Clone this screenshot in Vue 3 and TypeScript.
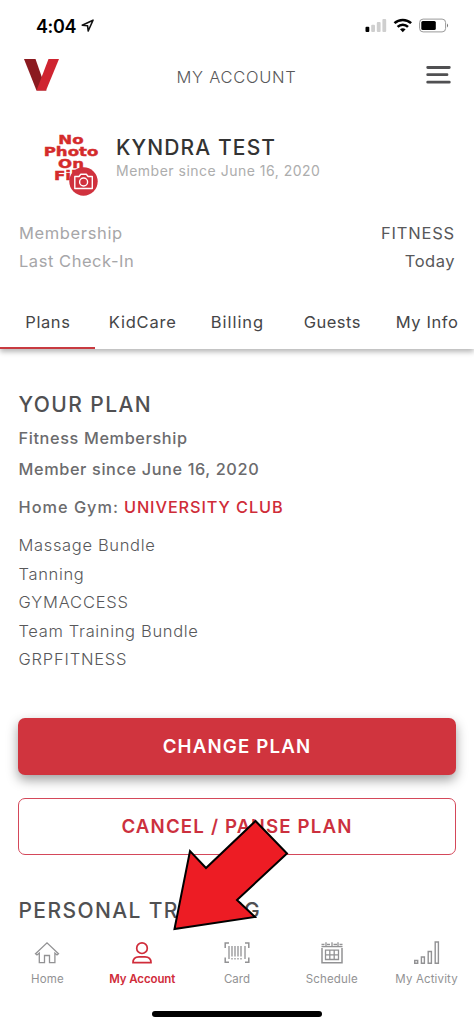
<script setup lang="ts">
interface Tab { label: string; cls: string }

const tabs: Tab[] = [
  { label: 'Plans', cls: 'plans' },
  { label: 'KidCare', cls: 'kidcare' },
  { label: 'Billing', cls: 'billing' },
  { label: 'Guests', cls: 'guests' },
  { label: 'My Info', cls: 'info' },
]
const bundles: string[] = ['Massage Bundle', 'Tanning', 'GYMACCESS', 'Team Training Bundle', 'GRPFITNESS']
</script>

<template>
  <div class="screen">
    <header class="status">
      <div class="time">
        <span>4:04</span>
        <svg width="14" height="14" viewBox="0 0 14 14"><path d="M1.2 6.2 12 1.2 7.2 12 6.6 6.8Z" fill="none" stroke="#111" stroke-width="1.6" stroke-linejoin="round" /></svg>
      </div>
      <svg class="system" width="86" height="18" viewBox="0 0 86 18">
        <rect x="0.5" y="9.7" width="3.8" height="5.3" rx="1" fill="#000" />
        <g fill="#cfcfcf">
          <rect x="6.2" y="7.8" width="3.8" height="7.2" rx="1" />
          <rect x="11.8" y="5" width="3.8" height="10" rx="1" />
          <rect x="17.4" y="2" width="3.8" height="13" rx="1" />
        </g>
        <g fill="none" stroke="#000" stroke-width="2.5">
          <path d="M29.5 6.2C34 1.8 41.6 1.8 46.1 6.2" />
          <path d="M32.6 9.9C35.5 7 40.1 7 43 9.9" />
        </g>
        <path d="M35 12.300Q37.800 10 40.600 12.300L37.800 15.300Z" />
        <rect x="54.6" y="2.1" width="26" height="12.8" rx="3.5" fill="none" stroke="#999" />
        <rect x="56.3" y="4" width="14.5" height="9" rx="1.5" />
        <path d="M82 6.5Q84.2 8.5 82 10.5Z" fill="#777" />
      </svg>
    </header>

    <div class="bar">
      <svg class="logo" width="36" height="32" viewBox="0 0 36 32">
        <path d="M0 0H11.5L22.500 31.500H12.500Z" fill="#8b1a20" />
        <path d="M24.500 0H35L22 31.500H12.500Z" fill="#cf2430" />
      </svg>
      <h1>MY ACCOUNT</h1>
      <svg class="menu" width="26" height="20" viewBox="0 0 26 20">
        <path d="M1.7 2.5H23.3M1.7 9.7H21M1.7 17.200H23.300" stroke="#505052" stroke-width="2.800" stroke-linecap="round" />
      </svg>
    </div>

    <section class="profile">
      <div class="photo">
        <div class="none"><span>No</span><span>Photo</span><span>On</span><span>File</span></div>
        <svg class="camera" width="29" height="29" viewBox="0 0 29 29">
          <circle cx="14.500" cy="14.500" r="14.200" fill="#d0323e" />
          <g fill="none" stroke="#fff" stroke-width="1.400" stroke-linejoin="round">
            <path d="M5.800 9.500H10L11.800 7.200H17.300L19.100 9.500H23.300V21.500H5.800Z" />
            <circle cx="14.600" cy="15" r="4" />
          </g>
        </svg>
      </div>
      <div class="who">
        <h2>KYNDRA TEST</h2>
        <p>Member since June 16, 2020</p>
      </div>
    </section>

    <dl class="meta">
      <div><dt>Membership</dt><dd class="caps">FITNESS</dd></div>
      <div><dt class="last">Last Check-In</dt><dd>Today</dd></div>
    </dl>

    <nav class="tabs">
      <a v-for="(tab, i) in tabs" :key="tab.label" :class="[tab.cls, { active: i === 0 }]">{{ tab.label }}</a>
    </nav>

    <main>
      <h3>YOUR PLAN</h3>
      <p class="strong">Fitness Membership</p>
      <p class="strong">Member since June 16, 2020</p>
      <p class="gym"><span>Home Gym:</span><a>UNIVERSITY CLUB</a></p>
      <ul>
        <li v-for="item in bundles" :key="item" :class="{ caps: item === item.toUpperCase() }">{{ item }}</li>
      </ul>
      <button class="primary">CHANGE PLAN</button>
      <button class="outline">CANCEL / PAUSE PLAN</button>
      <h3 class="training">PERSONAL TRAINING</h3>
    </main>

    <nav class="bottom">
      <a>
        <svg width="26" height="24" viewBox="0 0 26 24"><path d="M1.500 12.700 13 1.800 24.500 12.700 23 14 20.900 12.100V21.600H15.500V14.500H10.500V21.600H5.300V12.100L3 14Z" /></svg>
        <span class="home">Home</span>
      </a>
      <a class="current">
        <svg width="26" height="24" viewBox="0 0 26 24"><g stroke-width="1.700"><circle cx="13" cy="7.200" r="5.300" /><path d="M4 21.600C4 17.800 6.400 15.800 10 15.800H16C19.600 15.800 22 17.800 22 21.600Z" /></g></svg>
        <span>My Account</span>
      </a>
      <a>
        <svg width="26" height="24" viewBox="0 0 26 24"><path d="M5 2H1.200V7M21 2H24.800V7M5 21.200H1.200V16.500M21 21.200H24.800V16.500" stroke-width="1.500" /><path d="M5 5V18M8 5V15.500M11 5V15.500M14 5V15.500M17 5V15.500M21 5V18M8 17V18.500M11 17V18.500M14 17V18.500M17 17V18.500" /></svg>
        <span>Card</span>
      </a>
      <a>
        <svg width="26" height="24" viewBox="0 0 26 24"><path d="M2.500 3.500H5.500M8 3.500H11M14.500 3.500H18M20.500 3.500H23.500M2.500 5.700H23.500M7 1.300V6M13 1.300V6M19 1.300V6" /><path d="M3 7V21.700H23V7" stroke-width="1.500" /><path d="M6.500 9.200H19.500V18.500H6.500ZM10.800 9.200V18.500M15.200 9.200V18.500M6.500 13.800H19.500" /></svg>
        <span class="schedule">Schedule</span>
      </a>
      <a>
        <svg width="26" height="24" viewBox="0 0 26 24"><path d="M.700 19.500H3.700V22.300H.700ZM7.400 16H10.400V22.300H7.400ZM14.200 10.500H17.400V22.300H14.200ZM21.200 1H24.400V22.300H21.200Z" stroke-width="1.400" /></svg>
        <span class="activity">My Activity</span>
      </a>
    </nav>
    <div class="grip"></div>

    <svg class="pointer" width="118" height="114" viewBox="0 0 118 114">
      <path d="M3.500 110 19 32 35 49 84.500 2 116 34.500 66 81 84 98Z" fill="#ed1c24" stroke="#000" stroke-width="2" />
    </svg>
  </div>
</template>

<style>
body { margin: 0; background: #fff; }
</style>

<style scoped>
.screen { position: relative; display: flex; flex-direction: column; width: 474px; height: 1026px; overflow: hidden; background: #fff; font-family: Inter, "Liberation Sans", sans-serif; font-size: 16.5px; color: #58585a; }
h1, h2, h3, p, dl, dd, ul { margin: 0; padding: 0; font-weight: 400; }
svg { display: block; flex: none; }

.status { display: flex; justify-content: space-between; align-items: center; height: 52px; padding: 0 23px 0 36px; box-sizing: border-box; }
.time { display: flex; align-items: center; gap: 5px; font-size: 18px; font-weight: 600; letter-spacing: -.4px; color: #000; }

.bar { display: flex; justify-content: space-between; align-items: center; height: 49px; padding: 0 22px 0 24px; }
.bar h1 { font-size: 16.5px; font-weight: 300; letter-spacing: .72px; line-height: 24px; padding-right: 4px; }
.logo { margin-top: -3px; }
.menu { margin: -3px 0 0 9px; }

.profile { display: flex; height: 118px; padding-left: 42px; box-sizing: border-box; }
.photo { position: relative; width: 58px; height: 70px; margin-top: 33px; }
.none { display: flex; flex-direction: column; align-items: center; font: bold 12px/12px "DejaVu Sans", sans-serif; color: #d42b2b; -webkit-text-stroke: .4px #d42b2b; transform: scaleX(1.38); }
.camera { position: absolute; left: 27px; top: 33px; }
.who { padding: 33.5px 0 0 16px; }
.who h2 { font-size: 21px; line-height: 26px; font-weight: 500; letter-spacing: 1.12px; color: #333; }
.who p { font-size: 14px; line-height: 20px; letter-spacing: .5px; color: #adadad; }

.meta { padding: 0 19px; height: 76px; }
.meta div { display: flex; justify-content: space-between; line-height: 28.4px; }
.meta dt { color: #a6a6a8; letter-spacing: .63px; }
.meta dt.last { letter-spacing: .54px; }
.meta dd { letter-spacing: .5px; }
.meta dd.caps { letter-spacing: .8px; }

.tabs { display: grid; grid-template-columns: repeat(5, 1fr); height: 54px; box-shadow: 0 3px 5px rgba(0, 0, 0, .28); clip-path: inset(0 0 -14px 0); color: #454547; }
.tabs a { text-align: center; line-height: 54px; letter-spacing: .6px; box-sizing: border-box; height: 54px; padding-left: 1px; }
.tabs .active { border-bottom: 2.5px solid #c83a40; }
.tabs .kidcare { letter-spacing: .8px; }
.tabs .billing { letter-spacing: .95px; }
.tabs .guests { letter-spacing: .47px; }

main { padding: 42px 18px 0; height: 539px; }
main h3 { font-size: 21px; line-height: 28px; font-weight: 500; letter-spacing: 1.42px; padding: 0 0 4px .5px; color: #505052; }
.strong, .gym { font-size: 16.3px; font-weight: 500; line-height: 31px; letter-spacing: .62px; padding-left: .5px; color: #6b6b6d; }
.gym { display: flex; gap: 5px; margin-top: 7px; letter-spacing: 1.02px; }
.gym a { color: #cf2c38; letter-spacing: .9px; }
ul { list-style: none; padding: 8px 0 44px .5px; }
li { line-height: 28.5px; font-weight: 300; letter-spacing: .66px; }
li.caps { letter-spacing: .8px; }
button { display: block; width: 438px; height: 57px; padding: 0; box-sizing: border-box; border-radius: 7px; font: 600 18.7px Inter, sans-serif; letter-spacing: 1.15px; }
.primary { border: 0; background: #d0343e; color: #fff; box-shadow: 0 5px 12px rgba(0, 0, 0, .38); }
.outline { margin-top: 23px; border: 1.3px solid #d4485a; background: #fff; color: #cc303e; }
main .training { margin-top: 42.5px; letter-spacing: 1.4px; }

.bottom { display: grid; grid-template-columns: repeat(5, 1fr); position: absolute; left: 0; right: 0; bottom: 39.5px; color: #929294; font-size: 11.5px; line-height: 16px; }
.bottom a { display: flex; flex-direction: column; align-items: center; gap: 5.5px; }
.bottom svg { fill: none; stroke: currentColor; stroke-width: 1.3; }
.bottom .current { color: #d02c3a; font-weight: 600; letter-spacing: -.1px; }
.home, .schedule, .activity { letter-spacing: .15px; }
.grip { position: absolute; left: 152px; bottom: 9.5px; width: 170px; height: 5.5px; border-radius: 3px; background: #000; }
.pointer { position: absolute; left: 171px; top: 819px; }
</style>
